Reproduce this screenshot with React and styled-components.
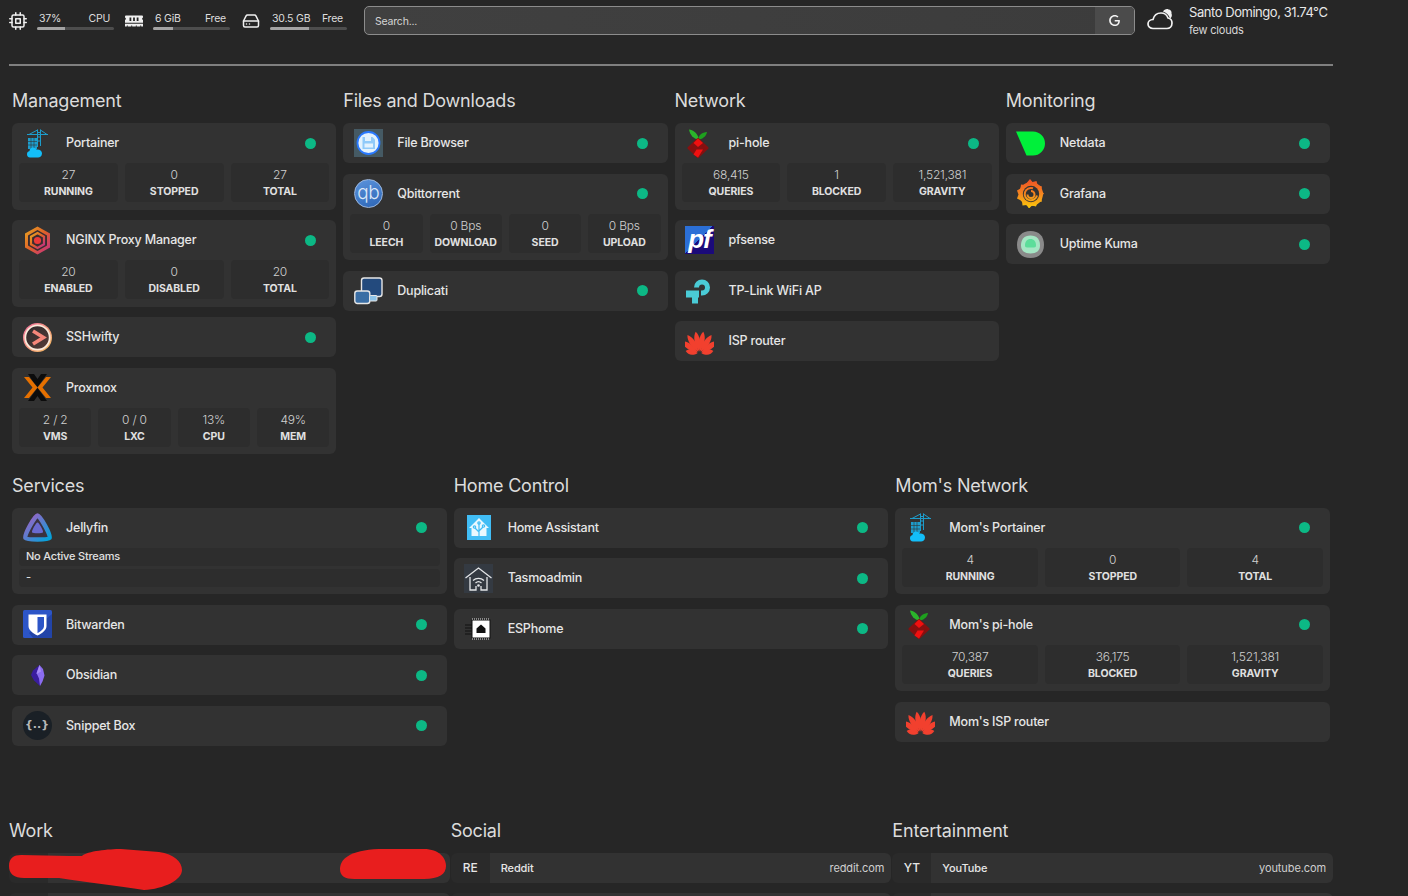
import React from "react";
import styled, { createGlobalStyle } from "styled-components";
import { FiCpu, FiHardDrive } from "react-icons/fi";
import { FaMemory } from "react-icons/fa";
import { SiGoogle } from "react-icons/si";

const GlobalStyle = createGlobalStyle`
  html, body {
    margin: 0;
    height: 100%;
    background: #262626;
    overflow: hidden;
  }
  body {
    font-family: Inter, "Noto Sans", "Liberation Sans", sans-serif;
    color: #e5e5e5;
  }
`;

const Page = styled.div`
  width: 1333px;
  height: 896px;
  padding-left: 9px;
  box-sizing: border-box;
  overflow: hidden;
`;

const TopBar = styled.div`
  display: flex;
  align-items: flex-start;
  height: 64px;
  padding-top: 6px;
  box-sizing: border-box;
`;

const Resource = styled.div`
  display: flex;
  align-items: center;
  height: 30px;
  width: 105px;
  margin-right: ${(p) => p.$gap}px;
  color: #f0f0f0;
`;

const ResourceIcon = styled.div`
  width: 28px;
  flex: none;
  display: flex;
  font-size: 18px;
`;

const Meter = styled.div`
  width: 77px;
  align-self: flex-start;
  margin-top: 6px;
`;

const MeterText = styled.div`
  display: flex;
  justify-content: space-between;
  padding: 0 4px 0 2px;
  font-size: 10.5px;
  line-height: 13px;
  letter-spacing: -0.2px;
  color: #dedede;
`;

const MeterTrack = styled.div`
  height: 3px;
  margin-top: 2px;
  border-radius: 2px;
  background: #4d4d4d;
  overflow: hidden;
`;

const MeterFill = styled.div`
  height: 100%;
  background: #a3a3a3;
`;

const SearchBox = styled.div`
  width: 771px;
  height: 29px;
  margin-left: 6px;
  box-sizing: border-box;
  display: flex;
  align-items: stretch;
  border: 1px solid #8c8c8c;
  border-radius: 5px;
  background: linear-gradient(90deg, #404040, #3c3c3c);
  overflow: hidden;
`;

const SearchText = styled.div`
  flex: 1;
  display: flex;
  align-items: center;
  padding: 1px 0 0 10px;
  font-size: 10.5px;
  letter-spacing: -0.2px;
  color: #d4d4d4;
`;

const SearchButton = styled.div`
  width: 39px;
  display: flex;
  align-items: center;
  justify-content: center;
  background: #4b4b4b;
  color: #f2f2f2;
  font-size: 11px;
`;

const Weather = styled.div`
  display: flex;
  margin-left: 12px;
  height: 30px;
`;

const WeatherIcon = styled.svg`
  width: 26px;
  height: 22px;
  margin-top: 2px;
  margin-right: 16px;
  flex: none;
`;

const WeatherText = styled.div`
  display: flex;
  flex-direction: column;
  margin-top: -1px;
`;

const WeatherCity = styled.div`
  font-size: 13px;
  line-height: 15px;
  letter-spacing: -0.45px;
  white-space: nowrap;
  color: #e8e8e8;
`;

const WeatherCondition = styled.div`
  font-size: 11px;
  line-height: 14px;
  margin-top: 3px;
  letter-spacing: -0.2px;
  color: #d8d8d8;
`;

const Rule = styled.div`
  height: 2px;
  background: #7f7f7f;
`;

const Row = styled.div`
  display: grid;
  grid-template-columns: repeat(${(p) => p.$cols}, 1fr);
  gap: ${(p) => p.$gap}px;
  margin-top: ${(p) => p.$top}px;
  margin-left: 3px;
  margin-right: 3px;
`;

const BookmarkRow = styled(Row)`
  margin-left: 0;
  margin-right: 0;
`;

const SectionTitle = styled.div`
  font-size: 18px;
  line-height: 24px;
  padding-top: 1px;
  margin-bottom: 10px;
  letter-spacing: -0.2px;
  font-weight: 400;
  color: #dcdcdc;
`;

const Cards = styled.div`
  display: flex;
  flex-direction: column;
  gap: 10.5px;
`;

const Card = styled.div`
  background: #323232;
  border-radius: 6px;
`;

const CardHeader = styled.div`
  height: 40px;
  display: flex;
  align-items: center;
  padding-left: 10.5px;
  padding-right: 20px;
`;

const IconSlot = styled.div`
  width: 29px;
  height: 29px;
  flex: none;
  margin-right: 14.5px;
  position: relative;
  & > svg {
    display: block;
    width: 29px;
    height: 29px;
  }
`;

const CardName = styled.div`
  flex: 1;
  padding-bottom: 1px;
  font-size: 12.5px;
  font-weight: 500;
  letter-spacing: -0.2px;
  color: #e6e6e6;
`;

const StatusDot = styled.div`
  width: 11px;
  height: 11px;
  border-radius: 50%;
  background: #0cb885;
`;

const Stats = styled.div`
  display: flex;
  gap: 7px;
  padding: 0 7px 7.5px;
`;

const Stat = styled.div`
  flex: 1;
  height: 39px;
  padding-top: 4px;
  box-sizing: border-box;
  border-radius: 4px;
  background: #2d2d2d;
  display: flex;
  flex-direction: column;
  align-items: center;
`;

const StatValue = styled.div`
  font-size: 12px;
  line-height: 16px;
  font-weight: 300;
  color: #d0d0d0;
  letter-spacing: -0.2px;
`;

const StatLabel = styled.div`
  font-size: 10.5px;
  line-height: 14px;
  margin-top: 2px;
  font-weight: 700;
  letter-spacing: -0.1px;
  color: #e0e0e0;
`;

const StreamList = styled.div`
  display: flex;
  flex-direction: column;
  gap: 3px;
  padding: 0 7px 7.5px;
`;

const StreamRow = styled.div`
  height: 18px;
  display: flex;
  align-items: center;
  padding-left: 7px;
  padding-bottom: 1px;
  box-sizing: border-box;
  border-radius: 4px;
  background: #2d2d2d;
  font-size: 11px;
  font-weight: 500;
  letter-spacing: -0.2px;
  color: #e0e0e0;
`;

const Bookmark = styled.div`
  display: flex;
  height: 29.5px;
  margin-bottom: 10.5px;
`;

const BookmarkTile = styled.div`
  width: 39px;
  flex: none;
  display: flex;
  align-items: center;
  justify-content: center;
  background: #2a2a2a;
  border-radius: 6px 0 0 6px;
  font-size: 12px;
  font-weight: 500;
  color: #e6e6e6;
`;

const BookmarkBody = styled.div`
  flex: 1;
  display: flex;
  align-items: center;
  justify-content: space-between;
  padding: 0 7px 0 11px;
  background: #323232;
  border-radius: 0 6px 6px 0;
  font-size: 11px;
  font-weight: 500;
  letter-spacing: -0.1px;
  color: #e6e6e6;
`;

const BookmarkUrl = styled.span`
  font-weight: 400;
  color: #cfcfcf;
`;

const Relative = styled.div`
  position: relative;
`;

// red marker strokes that hide the work bookmark, they lie on top of the row
const Scribble = styled.svg`
  position: absolute;
  left: 0;
  top: 30px;
  width: 441px;
  height: 44px;
  pointer-events: none;
`;

const QbLetters = styled.div`
  width: 29px;
  height: 29px;
  border-radius: 50%;
  border: 1px solid #9db8de;
  box-sizing: border-box;
  background: linear-gradient(160deg, #5b93dc, #2c65b5);
  color: #dbe7f7;
  font-size: 19px;
  line-height: 25px;
  font-weight: 300;
  text-align: center;
  letter-spacing: -0.5px;
`;

const PfTile = styled.div`
  width: 29px;
  height: 28px;
  background: linear-gradient(135deg, #2b6fd6 0 48%, #1b0a7a 48%);
  color: #fff;
  font-family: "Liberation Sans", sans-serif;
  font-size: 26px;
  line-height: 27px;
  font-weight: 700;
  font-style: italic;
  text-align: center;
  letter-spacing: -1px;
`;

const SnippetDisc = styled.div`
  width: 29px;
  height: 29px;
  border-radius: 50%;
  background: #1a2026;
  color: #b8b8b8;
  font-size: 11px;
  line-height: 28px;
  font-weight: 700;
  font-family: "DejaVu Sans", sans-serif;
  text-align: center;
`;

const Portainer = () => (
  <svg viewBox="0 0 29 29">
    <g stroke="#1d9dcc" fill="none" strokeWidth="1">
      <path d="M4 5.500h21M14.500 .5V18M17.500 .5V17M14.500 1 6 5.500M17.500 1 24 5.500M14.500 3.500h3M14.500 8h3M14.500 12h3" />
    </g>
    <rect x="5" y="9" width="9" height="11" fill="#1d9dcc" />
    <path d="M5 12.500h9M5 16h9M8 9v11M11 9v11" stroke="#323232" strokeWidth="0.6" />
    <path fill="#13bef9" d="M7 28.500c-2 0-3-1.500-3-3.200 0-1.800 1-3 2.500-3.300 0-2.200 1.500-3.500 3.500-3.500 1.500 0 2.800.7 3.500 2 2.500-.5 5.500.8 5.500 3.800 0 3-2 4.200-4 4.200z" />
  </svg>
);

const Npm = () => (
  <svg viewBox="0 0 29 29">
    <defs>
      <linearGradient id="npmg" x1="0" y1="0" x2="1" y2="1">
        <stop offset="0" stopColor="#e8a820" />
        <stop offset="0.5" stopColor="#e0602a" />
        <stop offset="1" stopColor="#c02a90" />
      </linearGradient>
    </defs>
    <path d="M14.500 .5 27 7.500v14l-12.500 7L2 21.500v-14z" fill="url(#npmg)" />
    <path d="M14.500 4 24 9.500v10L14.500 25 5 19.500v-10z" fill="#3a2c30" />
    <path d="M14.500 7 21 10.700v7.600L14.500 22 8 18.300v-7.600z" fill="none" stroke="url(#npmg)" strokeWidth="2.200" />
    <circle cx="14.500" cy="14.500" r="3.600" fill="#ea3a3a" />
  </svg>
);

const Sshwifty = () => (
  <svg viewBox="0 0 29 29">
    <defs>
      <linearGradient id="sshg" x1="0" y1="0" x2="1" y2="1">
        <stop offset="0" stopColor="#f070a0" />
        <stop offset="1" stopColor="#f5c060" />
      </linearGradient>
      <linearGradient id="sshf" x1="0" y1="0" x2="1" y2="1">
        <stop offset="0" stopColor="#2a2a2c" />
        <stop offset="1" stopColor="#5a3c38" />
      </linearGradient>
    </defs>
    <circle cx="14.500" cy="14.500" r="14.500" fill="url(#sshg)" />
    <circle cx="14.500" cy="14.500" r="12.200" fill="url(#sshf)" stroke="#fbe9da" strokeWidth="1.800" />
    <path d="M10 8 20.500 14.500 10 21" fill="none" stroke="#f6867a" strokeWidth="3.600" />
  </svg>
);

const Proxmox = () => (
  <svg viewBox="0 0 29 29">
    <path d="M5 1h6l3.500 5L18 1h6l-6.500 9L14.500 14 11 10zM5 28h6l3.500-5L18 28h6l-6.500-9-3-4-3 4z" fill="#0c0c0c" />
    <path d="M1 4h5l8.500 10.500L6 25H1l8.500-10.500zM28 4h-5l-8.500 10.500L23 25h5l-8.500-10.500z" fill="#e57000" />
  </svg>
);

const FileBrowser = () => (
  <svg viewBox="0 0 29 29">
    <rect width="29" height="28" fill="#455a64" />
    <circle cx="14.500" cy="14" r="11" fill="#e3f2fd" stroke="#2979ff" strokeWidth="1.800" />
    <path d="M8.500 8h10l2.500 2.500V20H8.500z" fill="#90caf9" />
    <rect x="11" y="8" width="6" height="4" fill="#e3f2fd" />
    <rect x="10.500" y="14.500" width="8.500" height="4" fill="#e3f2fd" />
  </svg>
);

const Duplicati = () => (
  <svg viewBox="0 0 29 29">
    <rect x="7.500" y="2" width="20.500" height="18.500" rx="2.500" fill="#234a7d" stroke="#e6e6e6" strokeWidth="1.400" />
    <rect x=".8" y="15" width="15" height="12.500" rx="2.500" fill="#3a6ea5" stroke="#e6e6e6" strokeWidth="1.400" />
    <rect x="15.500" y="19.500" width="7.500" height="5.500" rx="1" fill="#8dc3e8" stroke="#e6e6e6" strokeWidth="1" />
  </svg>
);

const PiHole = () => (
  <svg viewBox="0 0 29 29">
    <path d="M12.500 10.500C8.500 9.500 5 6 4 .5c4 .5 8 3.500 9.500 8z" fill="#2bb52b" />
    <path d="M13.500 9c.5-3 3.500-5.500 8.500-6-.5 3.500-3.500 6.500-7.500 7.500z" fill="#1ea01e" />
    <path d="M13 10.500 22 19 13 27.500 4 19z" fill="#861010" stroke="#861010" strokeWidth="3" strokeLinejoin="round" />
    <path d="M13 9.500 18 14 13 18 8.500 14zM18 20.500 13 28.500 8.500 25.500 11.500 20.500z" fill="#f01010" />
  </svg>
);

const TpLink = () => (
  <svg viewBox="0 0 29 29">
    <path d="M9 11.500a8 8 0 1 1 8 8h-1v-5h1a3 3 0 1 0-3-3H9z" fill="#4acbd6" />
    <path d="M1 14.500h13v7h-1v6H7v-6H1z" fill="#4acbd6" />
  </svg>
);

const fanAngles = [-80, -56, -33, -10, 10, 33, 56, 80];

const Huawei = () => (
  <svg viewBox="0 0 29 29">
    <defs>
      <radialGradient id="hwg" gradientUnits="userSpaceOnUse" cx="14.500" cy="26.500" r="22">
        <stop offset="0" stopColor="#8e0c08" />
        <stop offset="0.5" stopColor="#cf1a12" />
        <stop offset="1" stopColor="#f2402e" />
      </radialGradient>
    </defs>
    <g fill="url(#hwg)">
      {fanAngles.map((angle) => {
        const len = Math.abs(angle) > 70 ? 14 : 22;
        return (
          <path
            key={angle}
            transform={`translate(14.500 26.500) rotate(${angle})`}
            d={`M0 -2C-3.800 -${len * 0.45} -3.500 -${len * 0.8} 0 -${len}C3.500 -${len * 0.8} 3.800 -${len * 0.45} 0 -2z`}
          />
        );
      })}
    </g>
  </svg>
);

const Netdata = () => (
  <svg viewBox="0 0 29 29">
    <path d="M0 2.500h17a12 12 0 0 1 0 24h-6.500z" fill="#00f03a" />
  </svg>
);

const Grafana = () => (
  <svg viewBox="0 0 29 29">
    <defs>
      <linearGradient id="grg" gradientUnits="userSpaceOnUse" x1="0" y1="0" x2="0" y2="29">
        <stop offset="0" stopColor="#ef4f26" />
        <stop offset="0.55" stopColor="#f58a1f" />
        <stop offset="1" stopColor="#fbca0a" />
      </linearGradient>
    </defs>
    <circle cx="15" cy="15" r="12" fill="url(#grg)" />
    <path d="M14 0l2.500 3 4-1 1 4 4.500 1.500-1 4 3 3-3 3.500 1 4.500-4.500 1-1.500 4-4-1-3 3-2.500-3.500-4 .5-.5-4.500L1 19.500l1.500-4L1 11.500 4.500 9.500l.5-4 4 .5z" fill="url(#grg)" />
    <circle cx="15" cy="15" r="8.200" fill="#323232" />
    <path d="M21 16.500a6.200 6.200 0 1 1-4-7.200M11.500 15.500a3.500 3.500 0 1 0 3.500-3.500" fill="none" stroke="url(#grg)" strokeWidth="2" />
  </svg>
);

const UptimeKuma = () => (
  <svg viewBox="0 0 29 29">
    <path d="M14.500 1C23 1 28 6 28 15c0 8-5 13-13.500 13S1 23 1 15C1 6 6 1 14.500 1z" fill="#8a8a8a" />
    <path d="M14.500 5.500c6.500 0 9.500 4 9.500 10 0 5-3.500 8-9.500 8s-9.500-3-9.500-8c0-6 3-10 9.500-10z" fill="#a5e6c4" />
    <path d="M14.500 9c3.500 0 5.500 2.500 5.500 6.500 0 1-.5 2-2 2h-7c-1.500 0-2-1-2-2C9 11.500 11 9 14.500 9z" fill="#5cdd9a" />
  </svg>
);

const Jellyfin = () => (
  <svg viewBox="0 0 29 29">
    <defs>
      <linearGradient id="jfg" x1="0" y1="0" x2="1" y2="1">
        <stop offset="0" stopColor="#aa5cc3" />
        <stop offset="1" stopColor="#00a4dc" />
      </linearGradient>
    </defs>
    <path d="M14.500 2.500C12 2.500 1 22 2.500 25c1.500 2 22.500 2 24 0C28 22 17 2.500 14.500 2.500z" fill="#3a3240" stroke="url(#jfg)" strokeWidth="4.500" strokeLinejoin="round" />
    <path d="M14.500 9.500c-1.500 0-6 8-5.500 9.800.6 1.400 10.400 1.400 11 0 .5-1.800-4-9.800-5.500-9.800z" fill="#6a6ad0" />
  </svg>
);

const Bitwarden = () => (
  <svg viewBox="0 0 29 29">
    <rect width="29" height="28" rx="1.500" fill="#2c55c7" />
    <path d="M29 4v22.500A1.500 1.500 0 0 1 27.500 28H10l-4-5z" fill="#2244a8" />
    <path d="M5.500 4.500h18V16c0 4-4.500 7.500-9 9.500-4.500-2-9-5.500-9-9.500z" fill="#fff" />
    <path d="M14.500 7h6.500v9c0 3-3.500 5.500-6.500 7z" fill="#2c55c7" />
  </svg>
);

const Obsidian = () => (
  <svg viewBox="0 0 29 29">
    <path d="M16.500 4 10 9.500 8 14l3 5.500 6 5.500 1.500-7 .5-7z" fill="#3a1d9e" />
    <path d="M16.500 4 20 8l1.500 6.500-2 6L17 25l-1-7.500-2.500-5.500z" fill="#8b6cf0" />
    <path d="M16.500 4 18 10.500 13.500 13z" fill="#a98cf5" />
  </svg>
);

const HomeAssistant = () => (
  <svg viewBox="0 0 29 29">
    <rect x="3" y="2" width="24" height="25" fill="#41bdf5" />
    <path d="M15 5 25 15h-2.500v8h-15v-8H5z" fill="#eaf8fe" />
    <g stroke="#41bdf5" strokeWidth="1.200" fill="none">
      <path d="M15 10v13M11 15l4 4M19 14l-4 4" />
      <circle cx="15" cy="10" r="1.200" />
      <circle cx="10.500" cy="14" r="1.200" />
      <circle cx="19.500" cy="13" r="1.200" />
    </g>
  </svg>
);

const Tasmoadmin = () => (
  <svg viewBox="0 0 29 29">
    <rect width="29" height="29" fill="#343a42" />
    <g fill="none" stroke="#e4e6e8" strokeWidth="1.300">
      <path d="M1.500 14 14.500 4 27.500 14" />
      <path d="M6 13v13h6v-4M23 13v13h-6v-4" />
      <path d="M9 16.500a8 8 0 0 1 11 0M11.500 19a4.500 4.500 0 0 1 6 0" />
    </g>
    <circle cx="14.500" cy="21.500" r="1.300" fill="#e4e6e8" />
  </svg>
);

const EspHome = () => (
  <svg viewBox="0 0 29 29">
    <g stroke="#111" strokeWidth="1.200">
      <path d="M1 11h7M1 14h7M1 17h7M1 20h7" />
    </g>
    <rect x="8" y="6" width="18" height="18" fill="#fff" stroke="#111" strokeWidth="1" />
    <g stroke="#e0e0e0" strokeWidth="1" strokeDasharray="1 1">
      <path d="M8 5h18M8 25h18" />
    </g>
    <path d="M17 10.500l4.500 4v4.500h-9v-4.500z" fill="#111" />
  </svg>
);

const management = [
  { name: "Portainer", icon: <Portainer />, up: true, stats: [["27", "RUNNING"], ["0", "STOPPED"], ["27", "TOTAL"]] },
  { name: "NGINX Proxy Manager", icon: <Npm />, up: true, stats: [["20", "ENABLED"], ["0", "DISABLED"], ["20", "TOTAL"]] },
  { name: "SSHwifty", icon: <Sshwifty />, up: true },
  { name: "Proxmox", icon: <Proxmox />, stats: [["2 / 2", "VMS"], ["0 / 0", "LXC"], ["13%", "CPU"], ["49%", "MEM"]] },
];

const files = [
  { name: "File Browser", icon: <FileBrowser />, up: true },
  { name: "Qbittorrent", icon: <QbLetters>qb</QbLetters>, up: true, stats: [["0", "LEECH"], ["0 Bps", "DOWNLOAD"], ["0", "SEED"], ["0 Bps", "UPLOAD"]] },
  { name: "Duplicati", icon: <Duplicati />, up: true },
];

const network = [
  { name: "pi-hole", icon: <PiHole />, up: true, stats: [["68,415", "QUERIES"], ["1", "BLOCKED"], ["1,521,381", "GRAVITY"]] },
  { name: "pfsense", icon: <PfTile>pf</PfTile> },
  { name: "TP-Link WiFi AP", icon: <TpLink /> },
  { name: "ISP router", icon: <Huawei /> },
];

const monitoring = [
  { name: "Netdata", icon: <Netdata />, up: true },
  { name: "Grafana", icon: <Grafana />, up: true },
  { name: "Uptime Kuma", icon: <UptimeKuma />, up: true },
];

const services = [
  { name: "Jellyfin", icon: <Jellyfin />, up: true, streams: ["No Active Streams", "-"] },
  { name: "Bitwarden", icon: <Bitwarden />, up: true },
  { name: "Obsidian", icon: <Obsidian />, up: true },
  { name: "Snippet Box", icon: <SnippetDisc>{"{..}"}</SnippetDisc>, up: true },
];

const home = [
  { name: "Home Assistant", icon: <HomeAssistant />, up: true },
  { name: "Tasmoadmin", icon: <Tasmoadmin />, up: true },
  { name: "ESPhome", icon: <EspHome />, up: true },
];

const moms = [
  { name: "Mom's Portainer", icon: <Portainer />, up: true, stats: [["4", "RUNNING"], ["0", "STOPPED"], ["4", "TOTAL"]] },
  { name: "Mom's pi-hole", icon: <PiHole />, up: true, stats: [["70,387", "QUERIES"], ["36,175", "BLOCKED"], ["1,521,381", "GRAVITY"]] },
  { name: "Mom's ISP router", icon: <Huawei /> },
];

const ServiceCard = ({ item }) => (
  <Card>
    <CardHeader>
      <IconSlot>{item.icon}</IconSlot>
      <CardName>{item.name}</CardName>
      {item.up && <StatusDot />}
    </CardHeader>
    {item.stats && (
      <Stats>
        {item.stats.map(([value, label]) => (
          <Stat key={label}>
            <StatValue>{value}</StatValue>
            <StatLabel>{label}</StatLabel>
          </Stat>
        ))}
      </Stats>
    )}
    {item.streams && (
      <StreamList>
        {item.streams.map((line) => (
          <StreamRow key={line}>{line}</StreamRow>
        ))}
      </StreamList>
    )}
  </Card>
);

const Group = ({ title, items }) => (
  <div>
    <SectionTitle>{title}</SectionTitle>
    <Cards>
      {items.map((item) => (
        <ServiceCard key={item.name} item={item} />
      ))}
    </Cards>
  </div>
);

const BookmarkItem = ({ tile, name, url }) => (
  <Bookmark>
    <BookmarkTile>{tile}</BookmarkTile>
    <BookmarkBody>
      <span>{name}</span>
      <BookmarkUrl>{url}</BookmarkUrl>
    </BookmarkBody>
  </Bookmark>
);

const ResourceWidget = ({ icon, value, label, pct, gap }) => (
  <Resource $gap={gap}>
    <ResourceIcon>{icon}</ResourceIcon>
    <Meter>
      <MeterText>
        <span>{value}</span>
        <span>{label}</span>
      </MeterText>
      <MeterTrack>
        <MeterFill style={{ width: `${pct}%` }} />
      </MeterTrack>
    </Meter>
  </Resource>
);

export default function App() {
  return (
    <>
      <GlobalStyle />
      <Page>
        <TopBar>
          <ResourceWidget icon={<FiCpu />} value="37%" label="CPU" pct={37} gap={11} />
          <ResourceWidget icon={<FaMemory />} value="6 GiB" label="Free" pct={26} gap={12} />
          <ResourceWidget icon={<FiHardDrive />} value="30.5 GB" label="Free" pct={51} gap={11} />
          <SearchBox>
            <SearchText>Search...</SearchText>
            <SearchButton>
              <SiGoogle />
            </SearchButton>
          </SearchBox>
          <Weather>
            <WeatherIcon viewBox="0 0 26 22">
              <path d="M16 3.500C17 1.500 20 .5 21.500 1.500 23.500 1.500 25 3.500 24.500 5.500 25.500 7.500 24.500 10 23 10.500 22 7 19 4.500 16 3.500z" fill="#f2f2f2" />
              <path d="M6 20.500C3 20.500 1 18.500 1 16 1 13.500 3 11.500 6 11.500 7 7.500 10 5 14 5 17 5 20 7 21 10 23.500 10.500 25 12.500 25 15 25 18.500 22.500 20.500 20 20.500z" fill="none" stroke="#f2f2f2" strokeWidth="1.700" />
            </WeatherIcon>
            <WeatherText>
              <WeatherCity>Santo Domingo, 31.74°C</WeatherCity>
              <WeatherCondition>few clouds</WeatherCondition>
            </WeatherText>
          </Weather>
        </TopBar>
        <Rule />
        <Row $cols={4} $gap={7} $top={22}>
          <Group title="Management" items={management} />
          <Group title="Files and Downloads" items={files} />
          <Group title="Network" items={network} />
          <Group title="Monitoring" items={monitoring} />
        </Row>
        <Row $cols={3} $gap={7} $top={18.5}>
          <Group title="Services" items={services} />
          <Group title="Home Control" items={home} />
          <Group title="Mom's Network" items={moms} />
        </Row>
        <BookmarkRow $cols={3} $gap={1} $top={72.5}>
          <Relative>
            <SectionTitle>Work</SectionTitle>
            <BookmarkItem tile="" name="" url="" />
            <BookmarkItem tile="" name="" url="" />
            <Scribble viewBox="0 0 441 44">
              <path d="M0 18C0 10 5 7 12 7L60 8 73 8C78 3 100 1 112 1L150 4C165 6 173 14 173 22 173 32 155 41 135 42 110 38 75 34 50 30L15 30C5 30 0 26 0 18Z" fill="#e81e1e" />
              <path d="M331 21C331 9 345 1 375 1L415 1C430 1 437 10 437 18 437 26 430 31 415 31L345 31C336 31 331 28 331 21Z" fill="#e81e1e" />
            </Scribble>
          </Relative>
          <div>
            <SectionTitle>Social</SectionTitle>
            <BookmarkItem tile="RE" name="Reddit" url="reddit.com" />
            <BookmarkItem tile="" name="" url="" />
          </div>
          <div>
            <SectionTitle>Entertainment</SectionTitle>
            <BookmarkItem tile="YT" name="YouTube" url="youtube.com" />
            <BookmarkItem tile="" name="" url="" />
          </div>
        </BookmarkRow>
      </Page>
    </>
  );
}
